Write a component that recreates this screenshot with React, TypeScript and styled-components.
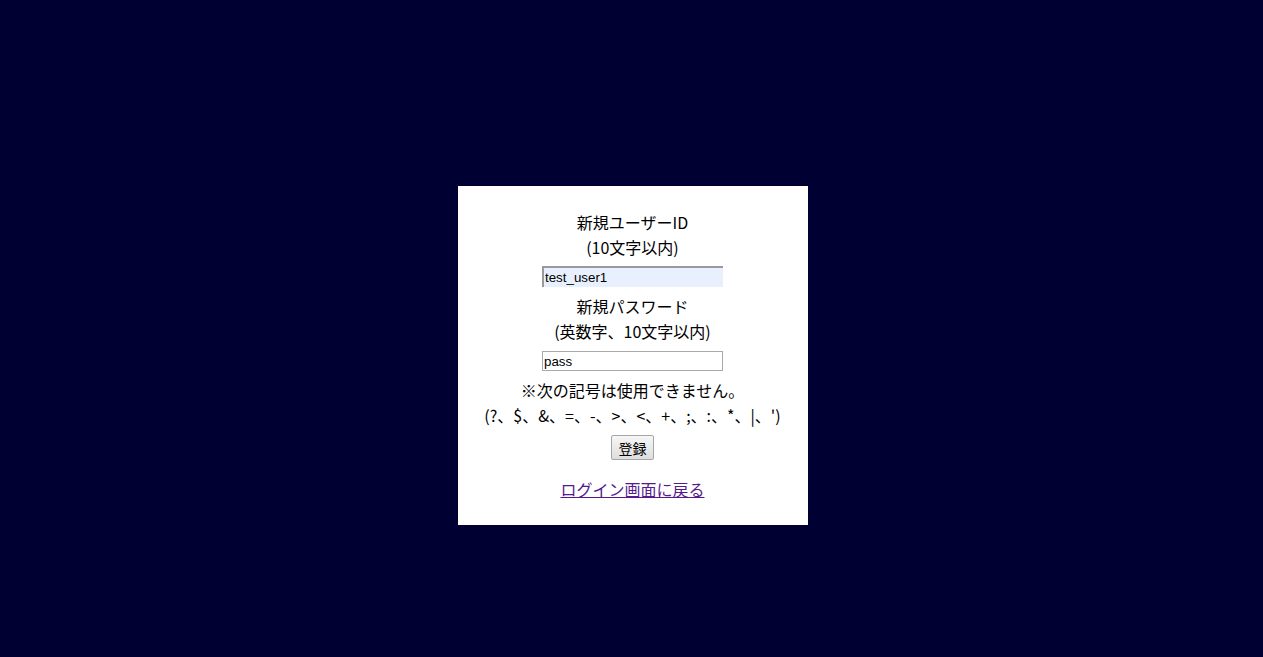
import styled, { createGlobalStyle } from 'styled-components';

const GlobalStyle = createGlobalStyle`
  html, body {
    margin: 0;
    padding: 0;
    background: #000033;
  }
  body {
    font-family: "Noto Sans CJK JP", "Noto Sans", sans-serif;
    font-size: 16px;
    color: #000;
  }
`;

const Page = styled.div`
  min-height: 657px;
  display: flex;
  justify-content: center;
  align-items: flex-start;
  padding: 186px 0 0 3px;
  box-sizing: border-box;
`;

const Card = styled.form`
  width: 350px;
  height: 339px;
  box-sizing: border-box;
  background: #fff;
  display: flex;
  flex-direction: column;
  align-items: center;
  padding: 24px 1px 23px 0;
`;

const Label = styled.div<{ $gap?: number }>`
  margin-top: ${p => p.$gap ?? 0}px;
  line-height: 25px;
  text-align: center;
  white-space: nowrap;
`;

const Field = styled.input<{ $filled?: boolean }>`
  margin-top: ${p => (p.$filled ? 6 : 7)}px;
  width: 181px;
  height: 21px;
  box-sizing: border-box;
  padding: 1px 1px;
  font-family: "Liberation Sans", Arial, sans-serif;
  font-size: 13.33px;
  color: #000;
  outline: none;
  background: ${p => (p.$filled ? '#e8f0fe' : '#fff')};
  border: 1px solid #a9a9a9;
  border-top: ${p => (p.$filled ? '2px solid #9a9a9a' : '1px solid #a9a9a9')};
  border-left: ${p => (p.$filled ? '2px solid #9a9a9a' : '1px solid #a9a9a9')};
  border-right: ${p => (p.$filled ? '0' : '1px solid #a9a9a9')};
  border-bottom: ${p => (p.$filled ? '0' : '1px solid #a9a9a9')};
`;

const Submit = styled.button`
  margin-top: 7px;
  width: 43px;
  height: 25px;
  padding: 0;
  font-family: "Noto Sans CJK JP", sans-serif;
  font-size: 14px;
  color: #000;
  border: 1px solid #a6a6a6;
  border-radius: 2px;
  background: linear-gradient(#f6f6f6, #dedede);
  cursor: pointer;
`;

const BackLink = styled.a`
  margin-top: 17px;
  line-height: 25px;
  color: #551a8b;
  text-decoration: underline;
`;

export default function App() {
  return (
    <>
      <GlobalStyle />
      <Page>
        <Card onSubmit={e => e.preventDefault()}>
          <Label>
            新規ユーザーID
            <br />
            (10文字以内)
          </Label>
          <Field $filled type="text" defaultValue="test_user1" />
          <Label $gap={7}>
            新規パスワード
            <br />
            (英数字、10文字以内)
          </Label>
          <Field type="text" defaultValue="pass" />
          <Label $gap={7}>
            ※次の記号は使用できません。
            <br />
            (?、$、&amp;、=、-、&gt;、&lt;、+、;、:、*、|、')
          </Label>
          <Submit type="submit">登録</Submit>
          <BackLink href="#">ログイン画面に戻る</BackLink>
        </Card>
      </Page>
    </>
  );
}
